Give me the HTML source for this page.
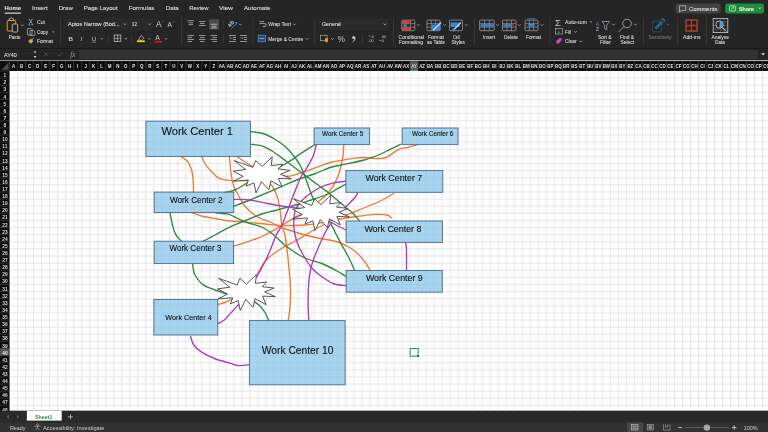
<!DOCTYPE html>
<html><head><meta charset="utf-8"><style>
*{margin:0;padding:0;box-sizing:border-box}
html,body{width:768px;height:432px;overflow:hidden;background:#222}
svg{will-change:transform}
body{position:relative;font-family:"Liberation Sans",sans-serif;color:#e6e6e6}
.a{position:absolute;white-space:nowrap}
</style></head><body>
<div class="a" style="left:0;top:0;width:768px;height:48px;background:#252525"></div>
<div class="a" style="left:0;top:48px;width:768px;height:12px;background:#242424"></div><div class="a" style="left:0;top:47.6px;width:768px;height:0.9px;background:#181818"></div><div class="a" style="left:37px;top:48px;width:0.8px;height:12px;background:#1a1a1a"></div>
<div class="a" style="left:79.4px;top:49.7px;width:678.5px;height:9.4px;background:#323232"></div>
<svg width="768" height="60" style="position:absolute;left:0;top:0" font-family="Liberation Sans"><text x="4.60" y="10.36" font-size="6.00" fill="#e4e4e4" stroke="#e4e4e4" stroke-width="0.07" font-weight="bold" textLength="16.40" lengthAdjust="spacingAndGlyphs">Home</text><text x="31.90" y="10.36" font-size="6.00" fill="#e4e4e4" stroke="#e4e4e4" stroke-width="0.07" font-weight="normal" textLength="15.90" lengthAdjust="spacingAndGlyphs">Insert</text><text x="58.70" y="10.36" font-size="6.00" fill="#e4e4e4" stroke="#e4e4e4" stroke-width="0.07" font-weight="normal" textLength="14.20" lengthAdjust="spacingAndGlyphs">Draw</text><text x="83.80" y="10.36" font-size="6.00" fill="#e4e4e4" stroke="#e4e4e4" stroke-width="0.07" font-weight="normal" textLength="33.80" lengthAdjust="spacingAndGlyphs">Page Layout</text><text x="128.75" y="10.36" font-size="6.00" fill="#e4e4e4" stroke="#e4e4e4" stroke-width="0.07" font-weight="normal" textLength="25.65" lengthAdjust="spacingAndGlyphs">Formulas</text><text x="165.80" y="10.36" font-size="6.00" fill="#e4e4e4" stroke="#e4e4e4" stroke-width="0.07" font-weight="normal" textLength="12.95" lengthAdjust="spacingAndGlyphs">Data</text><text x="189.20" y="10.36" font-size="6.00" fill="#e4e4e4" stroke="#e4e4e4" stroke-width="0.07" font-weight="normal" textLength="19.30" lengthAdjust="spacingAndGlyphs">Review</text><text x="219.00" y="10.36" font-size="6.00" fill="#e4e4e4" stroke="#e4e4e4" stroke-width="0.07" font-weight="normal" textLength="14.00" lengthAdjust="spacingAndGlyphs">View</text><text x="244.00" y="10.36" font-size="6.00" fill="#e4e4e4" stroke="#e4e4e4" stroke-width="0.07" font-weight="normal" textLength="26.40" lengthAdjust="spacingAndGlyphs">Automate</text><rect x="4.6" y="12.6" width="16.4" height="1.1" rx="0.5" fill="#d0d0d0"/><rect x="675.4" y="3.6" width="45.3" height="9.8" rx="2.2" fill="#424242"/><path d="M679.5 5.8h6.2v4.6h-4.2l-2 1.6z" stroke="#d0d0d0" stroke-width="0.7" fill="none" stroke-linejoin="round"/><text x="689.00" y="10.52" font-size="5.60" fill="#e8e8e8" stroke="#e8e8e8" stroke-width="0.07" font-weight="normal" textLength="28.50" lengthAdjust="spacingAndGlyphs">Comments</text><rect x="725.1" y="3.6" width="38.9" height="9.8" rx="2.2" fill="#1e8c3c"/><rect x="729.5" y="5.8" width="6" height="5.2" rx="0.8" stroke="#e0f0e0" stroke-width="0.7" fill="none"/><path d="M731 9.5l2.5-2.4M733.5 7.1h-1.6M733.5 7.1v1.6" stroke="#e0f0e0" stroke-width="0.6" fill="none"/><text x="739.00" y="10.59" font-size="5.80" fill="#f0f7f0" stroke="#f0f7f0" stroke-width="0.07" font-weight="bold" textLength="15.00" lengthAdjust="spacingAndGlyphs">Share</text><path d="M758.50 7.40l1.3 1.4l1.3 -1.4" stroke="#e0f0e0" stroke-width="0.7" fill="none"/><rect x="7.2" y="20.5" width="8.5" height="10.5" rx="0.8" stroke="#e39b2f" stroke-width="1.0" fill="none"/><path d="M9.2 20.2v-1.3l2.2-1 2.2 1v1.3" stroke="#c9c9c9" stroke-width="0.8" fill="none"/><rect x="12.3" y="24" width="5.3" height="8" rx="0.7" stroke="#cfcfcf" stroke-width="0.8" fill="#222"/><path d="M21.10 24.60l1.3 1.4l1.3 -1.4" stroke="#bdbdbd" stroke-width="0.7" fill="none"/><text x="8.70" y="39.00" font-size="5.00" fill="#dedede" stroke="#dedede" stroke-width="0.07" font-weight="normal" textLength="11.80" lengthAdjust="spacingAndGlyphs">Paste</text><path d="M29 18.8l3 4.6M32.5 18.8l-3 4.6" stroke="#c8c8c8" stroke-width="0.7" fill="none"/><circle cx="29.3" cy="24.5" r="1" fill="#3f8fd8"/><circle cx="32.2" cy="24.5" r="1" fill="#3f8fd8"/><text x="37.00" y="24.00" font-size="5.00" fill="#dedede" stroke="#dedede" stroke-width="0.07" font-weight="normal" textLength="8.00" lengthAdjust="spacingAndGlyphs">Cut</text><path d="M27.5 28.5h3.5l1 1v5.5h-4.5z M30 30.5h3.5l1.3 1.3v3.8h-4.8z" stroke="#c8c8c8" stroke-width="0.6" fill="none"/><text x="37.00" y="33.80" font-size="5.00" fill="#dedede" stroke="#dedede" stroke-width="0.07" font-weight="normal" textLength="11.00" lengthAdjust="spacingAndGlyphs">Copy</text><path d="M52.00 31.40h2.4l-1.2 1.4z" fill="#bdbdbd"/><path d="M28.2 41.5l2.8 2.3 2.4-2.8-2.8-2.3z" fill="#e8a83a"/><path d="M31.8 40l2-2.2" stroke="#c8c8c8" stroke-width="0.8"/><text x="37.00" y="42.80" font-size="5.00" fill="#dedede" stroke="#dedede" stroke-width="0.07" font-weight="normal" textLength="16.00" lengthAdjust="spacingAndGlyphs">Format</text><rect x="60.20" y="17.50" width="0.8" height="27.00" fill="#3a3a3a"/><rect x="65.2" y="19.2" width="62.7" height="10.4" rx="1.2" fill="#2a2a2a" stroke="#333" stroke-width="0.5"/><text x="68.00" y="26.31" font-size="5.30" fill="#e0e0e0" stroke="#e0e0e0" stroke-width="0.07" font-weight="normal" textLength="51.50" lengthAdjust="spacingAndGlyphs">Aptos Narrow (Bod...</text><path d="M123.50 23.50l1.3 1.4l1.3 -1.4" stroke="#bdbdbd" stroke-width="0.7" fill="none"/><rect x="129.2" y="19.2" width="23.7" height="10.4" rx="1.2" fill="#2a2a2a" stroke="#333" stroke-width="0.5"/><text x="131.80" y="26.31" font-size="5.30" fill="#e0e0e0" stroke="#e0e0e0" stroke-width="0.07" font-weight="normal" textLength="5.20" lengthAdjust="spacingAndGlyphs">12</text><path d="M148.30 23.50l1.3 1.4l1.3 -1.4" stroke="#bdbdbd" stroke-width="0.7" fill="none"/><text x="156" y="27" font-size="8.2" fill="#d6d6d6">A</text><path d="M161.8 22.2l0.8-0.8 0.8 0.8" stroke="#3f8fd8" stroke-width="0.6" fill="none"/><text x="167.6" y="27" font-size="6.5" fill="#d6d6d6">A</text><path d="M172.7 21.4l0.8 0.8 0.8-0.8" stroke="#3f8fd8" stroke-width="0.6" fill="none"/><text x="68.4" y="41.2" font-size="6.2" font-weight="bold" fill="#cfcfcf">B</text><text x="80.6" y="41.2" font-size="6.2" font-style="italic" fill="#cfcfcf">I</text><text x="91.8" y="40.8" font-size="6.2" fill="#cfcfcf">U</text><rect x="91.8" y="41.8" width="4.2" height="0.5" fill="#cfcfcf"/><path d="M100.60 38.40h2.4l-1.2 1.4z" fill="#bdbdbd"/><rect x="108.10" y="34.00" width="0.8" height="9.00" fill="#3a3a3a"/><rect x="114.2" y="35" width="6.6" height="6.6" stroke="#cfcfcf" stroke-width="0.7" fill="none"/><path d="M117.5 35v6.6M114.2 38.3h6.6" stroke="#cfcfcf" stroke-width="0.6"/><path d="M124.50 37.90l1.3 1.4l1.3 -1.4" stroke="#bdbdbd" stroke-width="0.7" fill="none"/><rect x="131.10" y="34.00" width="0.8" height="9.00" fill="#3a3a3a"/><path d="M138.5 39.5l2.5-4 3 2.5-2.5 2.5z" stroke="#cfcfcf" stroke-width="0.6" fill="none"/><circle cx="143.5" cy="38" r="0.8" fill="#3f8fd8"/><rect x="137" y="40.4" width="7.8" height="1.7" fill="#f0e000"/><path d="M148.00 38.40h2.4l-1.2 1.4z" fill="#bdbdbd"/><text x="155.2" y="40.2" font-size="6.8" fill="#cfcfcf">A</text><rect x="154.5" y="40.9" width="7.5" height="1.7" fill="#e81010"/><path d="M164.80 38.40h2.4l-1.2 1.4z" fill="#bdbdbd"/><rect x="181.00" y="17.50" width="0.8" height="27.00" fill="#3a3a3a"/><rect x="187.50" y="20.40" width="6.50" height="0.7" fill="#c4c4c4"/><rect x="188.50" y="22.50" width="4.50" height="0.7" fill="#c4c4c4"/><rect x="188.50" y="24.40" width="4.50" height="0.7" fill="#c4c4c4"/><rect x="199.00" y="21.30" width="6.50" height="0.7" fill="#c4c4c4"/><rect x="200.00" y="23.30" width="4.50" height="0.7" fill="#c4c4c4"/><rect x="199.00" y="25.30" width="6.50" height="0.7" fill="#c4c4c4"/><rect x="209" y="19.2" width="10" height="10.4" rx="0.8" fill="#4a4a4a"/><rect x="210.80" y="23.80" width="6.50" height="0.7" fill="#d8d8d8"/><rect x="211.80" y="25.80" width="4.50" height="0.7" fill="#d8d8d8"/><rect x="210.80" y="27.60" width="6.50" height="0.7" fill="#d8d8d8"/><rect x="222.90" y="20.00" width="0.8" height="8.50" fill="#3a3a3a"/><text x="0" y="0" transform="translate(229.6,27.2) rotate(-42)" font-size="5.6" font-weight="bold" fill="#c8c8c8">ab</text><path d="M231.2 28.6l5.6-5.6" stroke="#3f8fd8" stroke-width="0.9"/><path d="M235.2 22.6h1.8v1.8" stroke="#3f8fd8" stroke-width="0.7" fill="none"/><path d="M239.20 23.80l1.3 1.4l1.3 -1.4" stroke="#bdbdbd" stroke-width="0.7" fill="none"/><rect x="187.50" y="35.00" width="6.50" height="0.7" fill="#c4c4c4"/><rect x="187.50" y="37.00" width="4.50" height="0.7" fill="#c4c4c4"/><rect x="187.50" y="39.00" width="6.50" height="0.7" fill="#c4c4c4"/><rect x="187.50" y="41.00" width="4.50" height="0.7" fill="#c4c4c4"/><rect x="199.00" y="35.00" width="6.50" height="0.7" fill="#c4c4c4"/><rect x="200.00" y="37.00" width="4.50" height="0.7" fill="#c4c4c4"/><rect x="199.00" y="39.00" width="6.50" height="0.7" fill="#c4c4c4"/><rect x="200.00" y="41.00" width="4.50" height="0.7" fill="#c4c4c4"/><rect x="210.50" y="35.00" width="6.50" height="0.7" fill="#c4c4c4"/><rect x="212.50" y="37.00" width="4.50" height="0.7" fill="#c4c4c4"/><rect x="210.50" y="39.00" width="6.50" height="0.7" fill="#c4c4c4"/><rect x="212.50" y="41.00" width="4.50" height="0.7" fill="#c4c4c4"/><rect x="223.00" y="34.00" width="0.8" height="9.00" fill="#3a3a3a"/><rect x="229.00" y="35.00" width="7.00" height="0.7" fill="#c4c4c4"/><rect x="233.00" y="37.00" width="3.00" height="0.7" fill="#c4c4c4"/><rect x="233.00" y="39.00" width="3.00" height="0.7" fill="#c4c4c4"/><rect x="229.00" y="41.00" width="7.00" height="0.7" fill="#c4c4c4"/><path d="M229.5 38h3M230.8 36.8l-1.3 1.2 1.3 1.2" stroke="#3f8fd8" stroke-width="0.7" fill="none"/><rect x="240.00" y="35.00" width="7.00" height="0.7" fill="#c4c4c4"/><rect x="244.00" y="37.00" width="3.00" height="0.7" fill="#c4c4c4"/><rect x="244.00" y="39.00" width="3.00" height="0.7" fill="#c4c4c4"/><rect x="240.00" y="41.00" width="7.00" height="0.7" fill="#c4c4c4"/><path d="M240.2 38h3M242 36.8l1.3 1.2-1.3 1.2" stroke="#3f8fd8" stroke-width="0.7" fill="none"/><rect x="252.50" y="17.50" width="0.8" height="27.00" fill="#3a3a3a"/><path d="M259.5 21.5h4.5M259.5 23.5h5.5c1.5 0 1.5 3 0 3h-2" stroke="#c4c4c4" stroke-width="0.7" fill="none"/><path d="M263 26.5l1-1M263 26.5l1 1" stroke="#3f8fd8" stroke-width="0.7"/><text x="268.20" y="26.30" font-size="5.00" fill="#dedede" stroke="#dedede" stroke-width="0.07" font-weight="normal" textLength="22.60" lengthAdjust="spacingAndGlyphs">Wrap Text</text><path d="M293.20 23.60l1.3 1.4l1.3 -1.4" stroke="#bdbdbd" stroke-width="0.7" fill="none"/><rect x="258.2" y="35.2" width="7.3" height="6.6" stroke="#4aa0e0" stroke-width="0.7" fill="#2c4a66"/><path d="M259.5 38.5h4.7" stroke="#d8e8f8" stroke-width="0.6"/><text x="268.20" y="40.80" font-size="5.00" fill="#dedede" stroke="#dedede" stroke-width="0.07" font-weight="normal" textLength="35.10" lengthAdjust="spacingAndGlyphs">Merge &amp; Centre</text><path d="M305.70 38.10l1.3 1.4l1.3 -1.4" stroke="#bdbdbd" stroke-width="0.7" fill="none"/><rect x="314.40" y="17.50" width="0.8" height="27.00" fill="#3a3a3a"/><rect x="319.2" y="19.2" width="68.7" height="10.4" rx="1.2" fill="#2a2a2a" stroke="#333" stroke-width="0.5"/><text x="322.00" y="26.31" font-size="5.30" fill="#e0e0e0" stroke="#e0e0e0" stroke-width="0.07" font-weight="normal" textLength="18.80" lengthAdjust="spacingAndGlyphs">General</text><path d="M383.70 23.60l1.3 1.4l1.3 -1.4" stroke="#bdbdbd" stroke-width="0.7" fill="none"/><rect x="320.5" y="35.2" width="6.5" height="5.5" stroke="#bdbdbd" stroke-width="0.6" fill="none"/><rect x="325" y="38" width="3" height="4.3" rx="1" fill="#e59a2f"/><path d="M331.20 38.10l1.3 1.4l1.3 -1.4" stroke="#bdbdbd" stroke-width="0.7" fill="none"/><text x="337.4" y="42.2" font-size="8.4" fill="#c8c8c8">%</text><circle cx="353.6" cy="37.4" r="1.5" fill="#c8c8c8"/><path d="M354.9 37.6c0.3 2-0.6 3.4-2.2 4.2" stroke="#c8c8c8" stroke-width="1" fill="none"/><rect x="362.10" y="34.00" width="0.8" height="9.00" fill="#3a3a3a"/><text x="368.5" y="41.8" font-size="3.6" fill="#c8c8c8">.00</text><text x="371" y="37.6" font-size="3.6" fill="#c8c8c8">.0</text><path d="M368.3 36h2.5" stroke="#3f8fd8" stroke-width="0.8"/><text x="381" y="41.8" font-size="3.6" fill="#c8c8c8">.0</text><text x="381" y="37.6" font-size="3.6" fill="#c8c8c8">.00</text><path d="M379 40.5h2.5" stroke="#3f8fd8" stroke-width="0.8"/><rect x="393.20" y="17.50" width="0.8" height="27.00" fill="#3a3a3a"/><rect x="401.80" y="20.10" width="13.00" height="10.60" rx="1" stroke="#bdbdbd" stroke-width="0.6" fill="none"/><path d="M406.13 20.10v10.60" stroke="#bdbdbd" stroke-width="0.5"/><path d="M401.80 23.63h13.00" stroke="#bdbdbd" stroke-width="0.5"/><path d="M410.47 20.10v10.60" stroke="#bdbdbd" stroke-width="0.5"/><path d="M401.80 27.17h13.00" stroke="#bdbdbd" stroke-width="0.5"/><rect x="402.2" y="20.5" width="8.6" height="3.2" fill="#d0413a"/><rect x="402.2" y="27.3" width="8.6" height="3.2" fill="#d0413a"/><rect x="403.5" y="24.3" width="3" height="2.4" fill="#3f8fd8"/><path d="M417.20 24.30l1.3 1.4l1.3 -1.4" stroke="#bdbdbd" stroke-width="0.7" fill="none"/><text x="398.50" y="38.50" font-size="5.00" fill="#dedede" stroke="#dedede" stroke-width="0.07" font-weight="normal" textLength="25.50" lengthAdjust="spacingAndGlyphs">Conditional</text><text x="399.00" y="43.70" font-size="5.00" fill="#dedede" stroke="#dedede" stroke-width="0.07" font-weight="normal" textLength="24.00" lengthAdjust="spacingAndGlyphs">Formatting</text><rect x="427.00" y="20.10" width="13.00" height="10.60" rx="1" stroke="#bdbdbd" stroke-width="0.6" fill="none"/><path d="M431.33 20.10v10.60" stroke="#bdbdbd" stroke-width="0.5"/><path d="M427.00 23.63h13.00" stroke="#bdbdbd" stroke-width="0.5"/><path d="M435.67 20.10v10.60" stroke="#bdbdbd" stroke-width="0.5"/><path d="M427.00 27.17h13.00" stroke="#bdbdbd" stroke-width="0.5"/><path d="M432 24.5h8.5v6h-8.5z" fill="#2f8ae0"/><path d="M433 30.5l8-8" stroke="#d8d8d8" stroke-width="1.2"/><path d="M443.20 24.30l1.3 1.4l1.3 -1.4" stroke="#bdbdbd" stroke-width="0.7" fill="none"/><text x="428.00" y="38.50" font-size="5.00" fill="#dedede" stroke="#dedede" stroke-width="0.07" font-weight="normal" textLength="16.00" lengthAdjust="spacingAndGlyphs">Format</text><text x="427.00" y="43.70" font-size="5.00" fill="#dedede" stroke="#dedede" stroke-width="0.07" font-weight="normal" textLength="18.00" lengthAdjust="spacingAndGlyphs">as Table</text><rect x="449.5" y="20.1" width="13" height="10.6" rx="1" stroke="#bdbdbd" stroke-width="0.6" fill="none"/><rect x="450.5" y="22.5" width="9" height="4.5" fill="#2f8ae0"/><path d="M453 30.5l8-8" stroke="#d8d8d8" stroke-width="1.2"/><circle cx="453.5" cy="30" r="1.5" fill="#2f8ae0"/><path d="M465.20 24.30l1.3 1.4l1.3 -1.4" stroke="#bdbdbd" stroke-width="0.7" fill="none"/><text x="453.00" y="38.50" font-size="5.00" fill="#dedede" stroke="#dedede" stroke-width="0.07" font-weight="normal" textLength="6.50" lengthAdjust="spacingAndGlyphs">Cell</text><text x="451.50" y="43.70" font-size="5.00" fill="#dedede" stroke="#dedede" stroke-width="0.07" font-weight="normal" textLength="13.50" lengthAdjust="spacingAndGlyphs">Styles</text><rect x="474.00" y="17.50" width="0.8" height="27.00" fill="#3a3a3a"/><rect x="479.60" y="20.10" width="14.60" height="10.60" rx="1" stroke="#bdbdbd" stroke-width="0.6" fill="none"/><path d="M484.47 20.10v10.60" stroke="#bdbdbd" stroke-width="0.5"/><path d="M479.60 23.63h14.60" stroke="#bdbdbd" stroke-width="0.5"/><path d="M489.33 20.10v10.60" stroke="#bdbdbd" stroke-width="0.5"/><path d="M479.60 27.17h14.60" stroke="#bdbdbd" stroke-width="0.5"/><rect x="481" y="24.2" width="13" height="2.4" fill="#2f8ae0"/><path d="M482.5 23.5l-2 1.9 2 1.9" stroke="#2f8ae0" stroke-width="0.8" fill="none"/><path d="M496.20 24.30l1.3 1.4l1.3 -1.4" stroke="#bdbdbd" stroke-width="0.7" fill="none"/><text x="483.00" y="38.70" font-size="5.00" fill="#dedede" stroke="#dedede" stroke-width="0.07" font-weight="normal" textLength="12.00" lengthAdjust="spacingAndGlyphs">Insert</text><rect x="502.50" y="20.10" width="13.50" height="10.60" rx="1" stroke="#bdbdbd" stroke-width="0.6" fill="none"/><path d="M507.00 20.10v10.60" stroke="#bdbdbd" stroke-width="0.5"/><path d="M502.50 23.63h13.50" stroke="#bdbdbd" stroke-width="0.5"/><path d="M511.50 20.10v10.60" stroke="#bdbdbd" stroke-width="0.5"/><path d="M502.50 27.17h13.50" stroke="#bdbdbd" stroke-width="0.5"/><rect x="503.5" y="24.2" width="8" height="2.4" fill="#2f8ae0"/><path d="M510.5 23l3.8 3.8M514.3 23l-3.8 3.8" stroke="#d83a2a" stroke-width="0.8"/><path d="M518.20 24.30l1.3 1.4l1.3 -1.4" stroke="#bdbdbd" stroke-width="0.7" fill="none"/><text x="504.00" y="38.70" font-size="5.00" fill="#dedede" stroke="#dedede" stroke-width="0.07" font-weight="normal" textLength="14.00" lengthAdjust="spacingAndGlyphs">Delete</text><rect x="525.00" y="20.10" width="13.00" height="10.60" rx="1" stroke="#bdbdbd" stroke-width="0.6" fill="none"/><path d="M529.33 20.10v10.60" stroke="#bdbdbd" stroke-width="0.5"/><path d="M525.00 23.63h13.00" stroke="#bdbdbd" stroke-width="0.5"/><path d="M533.67 20.10v10.60" stroke="#bdbdbd" stroke-width="0.5"/><path d="M525.00 27.17h13.00" stroke="#bdbdbd" stroke-width="0.5"/><rect x="528.5" y="24" width="6" height="2.6" fill="#2f8ae0"/><rect x="527.3" y="18.4" width="8" height="0.7" fill="#2f8ae0"/><path d="M540.70 24.30l1.3 1.4l1.3 -1.4" stroke="#bdbdbd" stroke-width="0.7" fill="none"/><text x="526.00" y="38.70" font-size="5.00" fill="#dedede" stroke="#dedede" stroke-width="0.07" font-weight="normal" textLength="15.00" lengthAdjust="spacingAndGlyphs">Format</text><rect x="549.50" y="17.50" width="0.8" height="27.00" fill="#3a3a3a"/><text x="555" y="25.8" font-size="9.6" fill="#c8c8c8">&#931;</text><text x="565.00" y="23.90" font-size="5.00" fill="#dedede" stroke="#dedede" stroke-width="0.07" font-weight="normal" textLength="21.90" lengthAdjust="spacingAndGlyphs">Auto-sum</text><path d="M589.80 21.40h2.4l-1.2 1.4z" fill="#bdbdbd"/><rect x="555.3" y="28.6" width="7" height="5.4" stroke="#bdbdbd" stroke-width="0.6" fill="none"/><path d="M558.8 30v3M557.5 31.8l1.3 1.3 1.3-1.3" stroke="#3f8fd8" stroke-width="0.6" fill="none"/><text x="565.00" y="33.70" font-size="5.00" fill="#dedede" stroke="#dedede" stroke-width="0.07" font-weight="normal" textLength="6.00" lengthAdjust="spacingAndGlyphs">Fill</text><path d="M574.20 31.10l1.3 1.4l1.3 -1.4" stroke="#bdbdbd" stroke-width="0.7" fill="none"/><path d="M555.5 42l4.5-4.5 2.3 2.3-4.5 4.5z" fill="#c33bc7"/><path d="M557.5 40l2.3 2.3" stroke="#f0c0f0" stroke-width="0.5"/><text x="565.00" y="43.30" font-size="5.00" fill="#dedede" stroke="#dedede" stroke-width="0.07" font-weight="normal" textLength="11.50" lengthAdjust="spacingAndGlyphs">Clear</text><path d="M579.70 40.70l1.3 1.4l1.3 -1.4" stroke="#bdbdbd" stroke-width="0.7" fill="none"/><text x="595.7" y="25.5" font-size="5" fill="#3f8fd8">A</text><text x="596" y="30.5" font-size="5" fill="#bdbdbd">Z</text><path d="M602 21.5h7.5l-2.8 3.8v4.5l-2-1v-3.5z" stroke="#c8c8c8" stroke-width="0.6" fill="none"/><path d="M612.20 23.80l1.3 1.4l1.3 -1.4" stroke="#bdbdbd" stroke-width="0.7" fill="none"/><text x="598.00" y="39.10" font-size="5.00" fill="#dedede" stroke="#dedede" stroke-width="0.07" font-weight="normal" textLength="13.50" lengthAdjust="spacingAndGlyphs">Sort &amp;</text><text x="600.00" y="43.80" font-size="5.00" fill="#dedede" stroke="#dedede" stroke-width="0.07" font-weight="normal" textLength="11.00" lengthAdjust="spacingAndGlyphs">Filter</text><circle cx="627" cy="23.5" r="4.3" stroke="#c8c8c8" stroke-width="0.7" fill="none"/><path d="M623.9 26.6l-5.4 5.4" stroke="#c8c8c8" stroke-width="0.7"/><path d="M634.20 23.80l1.3 1.4l1.3 -1.4" stroke="#bdbdbd" stroke-width="0.7" fill="none"/><text x="620.00" y="38.90" font-size="5.00" fill="#dedede" stroke="#dedede" stroke-width="0.07" font-weight="normal" textLength="14.00" lengthAdjust="spacingAndGlyphs">Find &amp;</text><text x="620.50" y="43.70" font-size="5.00" fill="#dedede" stroke="#dedede" stroke-width="0.07" font-weight="normal" textLength="13.50" lengthAdjust="spacingAndGlyphs">Select</text><rect x="643.10" y="17.50" width="0.8" height="27.00" fill="#3a3a3a"/><rect x="652.4" y="21.2" width="9" height="10.6" rx="0.6" stroke="#25556f" stroke-width="0.8" fill="none"/><path d="M655.5 28.5l6.5-6.5" stroke="#2d6a8c" stroke-width="2.6"/><path d="M656.2 26.6l1.6 1.6M657.6 25.2l1.6 1.6M659 23.8l1.6 1.6" stroke="#1c3f52" stroke-width="0.5"/><path d="M661.2 20.2l1.8-1.6 1.8 1.8-1.6 1.8" stroke="#2d6a8c" stroke-width="1.1" fill="none"/><path d="M666.70 23.80l1.3 1.4l1.3 -1.4" stroke="#6a6a6a" stroke-width="0.7" fill="none"/><text x="648.50" y="38.80" font-size="5.00" fill="#777777" stroke="#777777" stroke-width="0.07" font-weight="normal" textLength="23.00" lengthAdjust="spacingAndGlyphs">Sensitivity</text><rect x="677.30" y="17.50" width="0.8" height="27.00" fill="#3a3a3a"/><rect x="685.2" y="19.2" width="12.6" height="12.6" fill="#a83f2a"/><rect x="686.8" y="20.8" width="4" height="4" fill="#222"/><rect x="692.2" y="20.8" width="4" height="4" fill="#222"/><rect x="686.8" y="26.2" width="4" height="4" fill="#222"/><rect x="692.2" y="26.2" width="4" height="4" fill="#222"/><text x="683.00" y="39.10" font-size="5.00" fill="#dedede" stroke="#dedede" stroke-width="0.07" font-weight="normal" textLength="17.50" lengthAdjust="spacingAndGlyphs">Add-ins</text><rect x="706.20" y="17.50" width="0.8" height="27.00" fill="#3a3a3a"/><rect x="713.2" y="18.4" width="14.6" height="14.2" stroke="#cfcfcf" stroke-width="0.8" fill="none"/><path d="M713.2 22h14.6M713.2 25.5h14.6M713.2 29h14.6M717 18.4v14.2M720.5 18.4v14.2M724 18.4v14.2" stroke="#8a8a8a" stroke-width="0.4"/><circle cx="719.5" cy="24.6" r="3.6" fill="#222" stroke="#e0e0e0" stroke-width="0.8"/><path d="M719.5 21.3a3.3 3.3 0 0 1 0 6.6z" fill="#4a9ae8"/><path d="M722 27.3l4.3 4.3" stroke="#e0e0e0" stroke-width="1"/><text x="711.50" y="39.20" font-size="5.00" fill="#dedede" stroke="#dedede" stroke-width="0.07" font-weight="normal" textLength="17.50" lengthAdjust="spacingAndGlyphs">Analyse</text><text x="715.00" y="43.80" font-size="5.00" fill="#dedede" stroke="#dedede" stroke-width="0.07" font-weight="normal" textLength="10.00" lengthAdjust="spacingAndGlyphs">Data</text><text x="4.00" y="56.69" font-size="5.80" fill="#e4e4e4" stroke="#e4e4e4" stroke-width="0.07" font-weight="normal" textLength="12.80" lengthAdjust="spacingAndGlyphs">AY40</text><path d="M33.6 52.6l1.5-1.9 1.5 1.9zM33.6 56.1l1.5 1.9 1.5-1.9z" fill="#d4d4d4"/><path d="M44.5 52.5l3.4 3.4M47.9 52.5l-3.4 3.4" stroke="#6a6a6a" stroke-width="0.6"/><path d="M57.8 54.4l1.6 1.6 3.2-3.4" stroke="#6a6a6a" stroke-width="0.6" fill="none"/><text x="70.3" y="56.9" font-size="7.2" font-style="italic" font-family="Liberation Serif" fill="#a0a0a0">fx</text><path d="M761.2 53.3h3.8l-1.9 2.2z" fill="#d8d8d8"/></svg><svg width="768" height="372" viewBox="0 60 768 372" style="position:absolute;left:0;top:60px"><rect x="0" y="60" width="768" height="1.2" fill="#8a8a8a"/><rect x="79.4" y="60" width="688.6" height="1.2" fill="#b4b4b4"/><rect x="0" y="61.2" width="768" height="9.80" fill="#0d0d0d"/><rect x="0" y="71.00" width="9.60" height="339.80" fill="#0d0d0d"/><rect x="9.60" y="71.00" width="758.40" height="339.80" fill="#ffffff"/><path d="M17.61 71.00V410.80M25.62 71.00V410.80M33.63 71.00V410.80M41.64 71.00V410.80M49.65 71.00V410.80M57.66 71.00V410.80M65.67 71.00V410.80M73.68 71.00V410.80M81.69 71.00V410.80M89.70 71.00V410.80M97.71 71.00V410.80M105.72 71.00V410.80M113.73 71.00V410.80M121.74 71.00V410.80M129.75 71.00V410.80M137.76 71.00V410.80M145.77 71.00V410.80M153.78 71.00V410.80M161.79 71.00V410.80M169.80 71.00V410.80M177.81 71.00V410.80M185.82 71.00V410.80M193.83 71.00V410.80M201.84 71.00V410.80M209.85 71.00V410.80M217.86 71.00V410.80M225.87 71.00V410.80M233.88 71.00V410.80M241.89 71.00V410.80M249.90 71.00V410.80M257.91 71.00V410.80M265.92 71.00V410.80M273.93 71.00V410.80M281.94 71.00V410.80M289.95 71.00V410.80M297.96 71.00V410.80M305.97 71.00V410.80M313.98 71.00V410.80M321.99 71.00V410.80M330.00 71.00V410.80M338.01 71.00V410.80M346.02 71.00V410.80M354.03 71.00V410.80M362.04 71.00V410.80M370.05 71.00V410.80M378.06 71.00V410.80M386.07 71.00V410.80M394.08 71.00V410.80M402.09 71.00V410.80M410.10 71.00V410.80M418.11 71.00V410.80M426.12 71.00V410.80M434.13 71.00V410.80M442.14 71.00V410.80M450.15 71.00V410.80M458.16 71.00V410.80M466.17 71.00V410.80M474.18 71.00V410.80M482.19 71.00V410.80M490.20 71.00V410.80M498.21 71.00V410.80M506.22 71.00V410.80M514.23 71.00V410.80M522.24 71.00V410.80M530.25 71.00V410.80M538.26 71.00V410.80M546.27 71.00V410.80M554.28 71.00V410.80M562.29 71.00V410.80M570.30 71.00V410.80M578.31 71.00V410.80M586.32 71.00V410.80M594.33 71.00V410.80M602.34 71.00V410.80M610.35 71.00V410.80M618.36 71.00V410.80M626.37 71.00V410.80M634.38 71.00V410.80M642.39 71.00V410.80M650.40 71.00V410.80M658.41 71.00V410.80M666.42 71.00V410.80M674.43 71.00V410.80M682.44 71.00V410.80M690.45 71.00V410.80M698.46 71.00V410.80M706.47 71.00V410.80M714.48 71.00V410.80M722.49 71.00V410.80M730.50 71.00V410.80M738.51 71.00V410.80M746.52 71.00V410.80M754.53 71.00V410.80M762.54 71.00V410.80M9.60 78.11H768M9.60 85.23H768M9.60 92.34H768M9.60 99.46H768M9.60 106.57H768M9.60 113.69H768M9.60 120.80H768M9.60 127.92H768M9.60 135.03H768M9.60 142.15H768M9.60 149.26H768M9.60 156.38H768M9.60 163.50H768M9.60 170.61H768M9.60 177.73H768M9.60 184.84H768M9.60 191.96H768M9.60 199.07H768M9.60 206.19H768M9.60 213.30H768M9.60 220.42H768M9.60 227.53H768M9.60 234.65H768M9.60 241.76H768M9.60 248.88H768M9.60 255.99H768M9.60 263.11H768M9.60 270.22H768M9.60 277.34H768M9.60 284.45H768M9.60 291.57H768M9.60 298.68H768M9.60 305.80H768M9.60 312.91H768M9.60 320.03H768M9.60 327.14H768M9.60 334.26H768M9.60 341.37H768M9.60 348.49H768M9.60 355.60H768M9.60 362.72H768M9.60 369.83H768M9.60 376.95H768M9.60 384.06H768M9.60 391.18H768M9.60 398.29H768M9.60 405.41H768" stroke="#e7e7e7" stroke-width="1" fill="none"/><path d="M9.60 61.2V71.00M17.61 61.2V71.00M25.62 61.2V71.00M33.63 61.2V71.00M41.64 61.2V71.00M49.65 61.2V71.00M57.66 61.2V71.00M65.67 61.2V71.00M73.68 61.2V71.00M81.69 61.2V71.00M89.70 61.2V71.00M97.71 61.2V71.00M105.72 61.2V71.00M113.73 61.2V71.00M121.74 61.2V71.00M129.75 61.2V71.00M137.76 61.2V71.00M145.77 61.2V71.00M153.78 61.2V71.00M161.79 61.2V71.00M169.80 61.2V71.00M177.81 61.2V71.00M185.82 61.2V71.00M193.83 61.2V71.00M201.84 61.2V71.00M209.85 61.2V71.00M217.86 61.2V71.00M225.87 61.2V71.00M233.88 61.2V71.00M241.89 61.2V71.00M249.90 61.2V71.00M257.91 61.2V71.00M265.92 61.2V71.00M273.93 61.2V71.00M281.94 61.2V71.00M289.95 61.2V71.00M297.96 61.2V71.00M305.97 61.2V71.00M313.98 61.2V71.00M321.99 61.2V71.00M330.00 61.2V71.00M338.01 61.2V71.00M346.02 61.2V71.00M354.03 61.2V71.00M362.04 61.2V71.00M370.05 61.2V71.00M378.06 61.2V71.00M386.07 61.2V71.00M394.08 61.2V71.00M402.09 61.2V71.00M410.10 61.2V71.00M418.11 61.2V71.00M426.12 61.2V71.00M434.13 61.2V71.00M442.14 61.2V71.00M450.15 61.2V71.00M458.16 61.2V71.00M466.17 61.2V71.00M474.18 61.2V71.00M482.19 61.2V71.00M490.20 61.2V71.00M498.21 61.2V71.00M506.22 61.2V71.00M514.23 61.2V71.00M522.24 61.2V71.00M530.25 61.2V71.00M538.26 61.2V71.00M546.27 61.2V71.00M554.28 61.2V71.00M562.29 61.2V71.00M570.30 61.2V71.00M578.31 61.2V71.00M586.32 61.2V71.00M594.33 61.2V71.00M602.34 61.2V71.00M610.35 61.2V71.00M618.36 61.2V71.00M626.37 61.2V71.00M634.38 61.2V71.00M642.39 61.2V71.00M650.40 61.2V71.00M658.41 61.2V71.00M666.42 61.2V71.00M674.43 61.2V71.00M682.44 61.2V71.00M690.45 61.2V71.00M698.46 61.2V71.00M706.47 61.2V71.00M714.48 61.2V71.00M722.49 61.2V71.00M730.50 61.2V71.00M738.51 61.2V71.00M746.52 61.2V71.00M754.53 61.2V71.00M762.54 61.2V71.00M0 71.00H9.60M0 78.11H9.60M0 85.23H9.60M0 92.34H9.60M0 99.46H9.60M0 106.57H9.60M0 113.69H9.60M0 120.80H9.60M0 127.92H9.60M0 135.03H9.60M0 142.15H9.60M0 149.26H9.60M0 156.38H9.60M0 163.50H9.60M0 170.61H9.60M0 177.73H9.60M0 184.84H9.60M0 191.96H9.60M0 199.07H9.60M0 206.19H9.60M0 213.30H9.60M0 220.42H9.60M0 227.53H9.60M0 234.65H9.60M0 241.76H9.60M0 248.88H9.60M0 255.99H9.60M0 263.11H9.60M0 270.22H9.60M0 277.34H9.60M0 284.45H9.60M0 291.57H9.60M0 298.68H9.60M0 305.80H9.60M0 312.91H9.60M0 320.03H9.60M0 327.14H9.60M0 334.26H9.60M0 341.37H9.60M0 348.49H9.60M0 355.60H9.60M0 362.72H9.60M0 369.83H9.60M0 376.95H9.60M0 384.06H9.60M0 391.18H9.60M0 398.29H9.60M0 405.41H9.60" stroke="#3a3a3a" stroke-width="0.8" fill="none"/><path d="M8.5 62.5V69.8H1.5Z" fill="#4a4a4a"/><g transform="scale(0.820,1)" font-family="Liberation Sans" font-size="5.4" font-weight="bold" fill="#e2e2e2" text-anchor="middle"><text x="16.59" y="67.9">A</text><text x="26.36" y="67.9">B</text><text x="36.13" y="67.9">C</text><text x="45.90" y="67.9">D</text><text x="55.66" y="67.9">E</text><text x="65.43" y="67.9">F</text><text x="75.20" y="67.9">G</text><text x="84.97" y="67.9">H</text><text x="94.74" y="67.9">I</text><text x="104.51" y="67.9">J</text><text x="114.27" y="67.9">K</text><text x="124.04" y="67.9">L</text><text x="133.81" y="67.9">M</text><text x="143.58" y="67.9">N</text><text x="153.35" y="67.9">O</text><text x="163.12" y="67.9">P</text><text x="172.88" y="67.9">Q</text><text x="182.65" y="67.9">R</text><text x="192.42" y="67.9">S</text><text x="202.19" y="67.9">T</text><text x="211.96" y="67.9">U</text><text x="221.73" y="67.9">V</text><text x="231.49" y="67.9">W</text><text x="241.26" y="67.9">X</text><text x="251.03" y="67.9">Y</text><text x="260.80" y="67.9">Z</text><text x="270.57" y="67.9">AA</text><text x="280.34" y="67.9">AB</text><text x="290.10" y="67.9">AC</text><text x="299.87" y="67.9">AD</text><text x="309.64" y="67.9">AE</text><text x="319.41" y="67.9">AF</text><text x="329.18" y="67.9">AG</text><text x="338.95" y="67.9">AH</text><text x="348.71" y="67.9">AI</text><text x="358.48" y="67.9">AJ</text><text x="368.25" y="67.9">AK</text><text x="378.02" y="67.9">AL</text><text x="387.79" y="67.9">AM</text><text x="397.55" y="67.9">AN</text><text x="407.32" y="67.9">AO</text><text x="417.09" y="67.9">AP</text><text x="426.86" y="67.9">AQ</text><text x="436.63" y="67.9">AR</text><text x="446.40" y="67.9">AS</text><text x="456.16" y="67.9">AT</text><text x="465.93" y="67.9">AU</text><text x="475.70" y="67.9">AV</text><text x="485.47" y="67.9">AW</text><text x="495.24" y="67.9">AX</text><text x="514.77" y="67.9">AZ</text><text x="524.54" y="67.9">BA</text><text x="534.31" y="67.9">BB</text><text x="544.08" y="67.9">BC</text><text x="553.85" y="67.9">BD</text><text x="563.62" y="67.9">BE</text><text x="573.38" y="67.9">BF</text><text x="583.15" y="67.9">BG</text><text x="592.92" y="67.9">BH</text><text x="602.69" y="67.9">BI</text><text x="612.46" y="67.9">BJ</text><text x="622.23" y="67.9">BK</text><text x="631.99" y="67.9">BL</text><text x="641.76" y="67.9">BM</text><text x="651.53" y="67.9">BN</text><text x="661.30" y="67.9">BO</text><text x="671.07" y="67.9">BP</text><text x="680.84" y="67.9">BQ</text><text x="690.60" y="67.9">BR</text><text x="700.37" y="67.9">BS</text><text x="710.14" y="67.9">BT</text><text x="719.91" y="67.9">BU</text><text x="729.68" y="67.9">BV</text><text x="739.45" y="67.9">BW</text><text x="749.21" y="67.9">BX</text><text x="758.98" y="67.9">BY</text><text x="768.75" y="67.9">BZ</text><text x="778.52" y="67.9">CA</text><text x="788.29" y="67.9">CB</text><text x="798.05" y="67.9">CC</text><text x="807.82" y="67.9">CD</text><text x="817.59" y="67.9">CE</text><text x="827.36" y="67.9">CF</text><text x="837.13" y="67.9">CG</text><text x="846.90" y="67.9">CH</text><text x="856.66" y="67.9">CI</text><text x="866.43" y="67.9">CJ</text><text x="876.20" y="67.9">CK</text><text x="885.97" y="67.9">CL</text><text x="895.74" y="67.9">CM</text><text x="905.51" y="67.9">CN</text><text x="915.27" y="67.9">CO</text><text x="925.04" y="67.9">CP</text><text x="934.81" y="67.9">CQ</text></g><g font-family="Liberation Sans" font-size="4.8" font-weight="bold" fill="#d8d8d8" text-anchor="middle"><text x="4.9" y="77.16">1</text><text x="4.9" y="84.27">2</text><text x="4.9" y="91.39">3</text><text x="4.9" y="98.50">4</text><text x="4.9" y="105.62">5</text><text x="4.9" y="112.73">6</text><text x="4.9" y="119.85">7</text><text x="4.9" y="126.96">8</text><text x="4.9" y="134.08">9</text><text x="4.9" y="141.19">10</text><text x="4.9" y="148.31">11</text><text x="4.9" y="155.42">12</text><text x="4.9" y="162.54">13</text><text x="4.9" y="169.65">14</text><text x="4.9" y="176.77">15</text><text x="4.9" y="183.88">16</text><text x="4.9" y="191.00">17</text><text x="4.9" y="198.11">18</text><text x="4.9" y="205.23">19</text><text x="4.9" y="212.34">20</text><text x="4.9" y="219.46">21</text><text x="4.9" y="226.57">22</text><text x="4.9" y="233.69">23</text><text x="4.9" y="240.80">24</text><text x="4.9" y="247.92">25</text><text x="4.9" y="255.03">26</text><text x="4.9" y="262.15">27</text><text x="4.9" y="269.26">28</text><text x="4.9" y="276.38">29</text><text x="4.9" y="283.49">30</text><text x="4.9" y="290.61">31</text><text x="4.9" y="297.72">32</text><text x="4.9" y="304.84">33</text><text x="4.9" y="311.95">34</text><text x="4.9" y="319.07">35</text><text x="4.9" y="326.18">36</text><text x="4.9" y="333.30">37</text><text x="4.9" y="340.41">38</text><text x="4.9" y="347.53">39</text><text x="4.9" y="354.64">40</text><text x="4.9" y="361.76">41</text><text x="4.9" y="368.87">42</text><text x="4.9" y="375.99">43</text><text x="4.9" y="383.10">44</text><text x="4.9" y="390.22">45</text><text x="4.9" y="397.33">46</text><text x="4.9" y="404.45">47</text><text x="4.9" y="411.56">48</text></g><rect x="410.10" y="61.2" width="8.01" height="9.80" fill="#5a5a5a"/><text x="505.01" y="67.9" transform="scale(0.82,1)" font-family="Liberation Sans" font-size="5.4" font-weight="bold" fill="#d0d0d0" text-anchor="middle">AY</text><rect x="0" y="348.49" width="9.60" height="7.12" fill="#555"/><text x="4.9" y="354.64" font-family="Liberation Sans" font-size="4.8" font-weight="bold" fill="#e8e8e8" text-anchor="middle">40</text><rect x="9.00" y="348.49" width="1" height="7.12" fill="#3f9a54"/><rect x="410.10" y="70.00" width="8.01" height="1" fill="#3f9a54"/><path d="M181.25 156.90C182.29 157.62 185.83 159.28 187.50 161.25C189.17 163.22 190.32 165.83 191.25 168.75C192.18 171.67 192.72 174.88 193.10 178.75C193.47 182.62 193.43 189.79 193.50 192.00" stroke="#ee7a32" stroke-width="1.35" fill="none" stroke-linecap="round" stroke-linejoin="round"/><path d="M201.90 157.00C202.42 158.12 203.44 161.38 205.00 163.75C206.56 166.12 209.27 169.06 211.25 171.25C213.23 173.44 215.03 175.54 216.90 176.90C218.78 178.26 219.90 178.78 222.50 179.40C225.10 180.02 228.12 180.40 232.50 180.60C236.88 180.80 243.83 180.53 248.75 180.60C253.67 180.67 258.25 180.27 262.00 181.00C265.75 181.73 268.67 182.25 271.25 185.00C273.83 187.75 276.04 193.33 277.50 197.50C278.96 201.67 279.27 205.32 280.00 210.00C280.73 214.68 281.07 221.43 281.90 225.60C282.73 229.77 284.07 230.31 285.00 235.00C285.93 239.69 286.73 247.08 287.50 253.75C288.27 260.42 289.08 269.17 289.60 275.00C290.12 280.83 290.53 283.33 290.60 288.75C290.67 294.17 290.42 302.19 290.00 307.50C289.58 312.81 288.42 318.42 288.10 320.60" stroke="#ee7a32" stroke-width="1.35" fill="none" stroke-linecap="round" stroke-linejoin="round"/><path d="M229.40 157.00C229.71 160.00 230.53 170.12 231.25 175.00C231.97 179.88 232.71 183.12 233.75 186.25C234.79 189.38 235.62 190.42 237.50 193.75C239.38 197.08 241.88 202.50 245.00 206.25C248.12 210.00 251.88 213.54 256.25 216.25C260.62 218.96 266.46 220.42 271.25 222.50C276.04 224.58 278.54 226.46 285.00 228.75C291.46 231.04 301.67 234.17 310.00 236.25C318.33 238.33 328.83 239.62 335.00 241.25C341.17 242.88 343.50 244.21 347.00 246.00C350.50 247.79 353.00 249.33 356.00 252.00C359.00 254.67 362.63 258.90 365.00 262.00C367.37 265.10 369.33 269.17 370.20 270.60" stroke="#ee7a32" stroke-width="1.35" fill="none" stroke-linecap="round" stroke-linejoin="round"/><path d="M237.50 156.90C239.58 158.25 245.42 162.48 250.00 165.00C254.58 167.52 258.85 170.12 265.00 172.00C271.15 173.88 279.82 176.48 286.90 176.25C293.98 176.02 300.32 172.89 307.50 170.60C314.68 168.31 324.58 164.17 330.00 162.50C335.42 160.83 335.83 161.33 340.00 160.60C344.17 159.87 350.83 158.62 355.00 158.10C359.17 157.58 361.46 157.43 365.00 157.50C368.54 157.57 372.71 158.50 376.25 158.50C379.79 158.50 382.50 159.02 386.25 157.50C390.00 155.98 395.21 151.07 398.75 149.40C402.29 147.73 404.58 148.20 407.50 147.50C410.42 146.80 414.79 145.58 416.25 145.20" stroke="#ee7a32" stroke-width="1.35" fill="none" stroke-linecap="round" stroke-linejoin="round"/><path d="M343.75 144.80C343.64 146.50 343.52 151.63 343.10 155.00C342.68 158.37 342.18 161.25 341.25 165.00C340.32 168.75 339.58 172.92 337.50 177.50C335.42 182.08 331.88 188.54 328.75 192.50C325.62 196.46 320.42 199.79 318.75 201.25" stroke="#ee7a32" stroke-width="1.35" fill="none" stroke-linecap="round" stroke-linejoin="round"/><path d="M191.90 212.75C193.67 213.33 198.44 215.25 202.50 216.25C206.56 217.25 211.67 217.96 216.25 218.75C220.83 219.54 225.42 220.47 230.00 221.00C234.58 221.53 238.33 221.44 243.75 221.90C249.17 222.36 256.14 223.13 262.50 223.75C268.86 224.37 274.82 225.39 281.90 225.60C288.98 225.81 298.65 225.43 305.00 225.00C311.35 224.57 314.17 224.00 320.00 223.00C325.83 222.00 333.54 220.12 340.00 219.00C346.46 217.88 352.92 217.02 358.75 216.25C364.58 215.48 370.21 214.61 375.00 214.40C379.79 214.19 384.79 214.38 387.50 215.00C390.21 215.62 390.62 217.58 391.25 218.10" stroke="#ee7a32" stroke-width="1.35" fill="none" stroke-linecap="round" stroke-linejoin="round"/><path d="M233.10 246.25C234.88 245.72 239.89 244.35 243.75 243.10C247.61 241.85 252.71 240.10 256.25 238.75C259.79 237.40 260.73 237.19 265.00 235.00C269.27 232.81 276.07 228.93 281.90 225.60C287.73 222.27 293.65 216.93 300.00 215.00C306.35 213.07 312.50 214.00 320.00 214.00C327.50 214.00 339.58 215.25 345.00 215.00C350.42 214.75 348.12 214.17 352.50 212.50C356.88 210.83 366.25 207.08 371.25 205.00C376.25 202.92 378.75 201.92 382.50 200.00C386.25 198.08 391.88 194.58 393.75 193.50" stroke="#ee7a32" stroke-width="1.35" fill="none" stroke-linecap="round" stroke-linejoin="round"/><path d="M257.50 273.75C258.96 271.46 262.29 264.17 266.25 260.00C270.21 255.83 276.04 252.08 281.25 248.75C286.46 245.42 292.08 243.12 297.50 240.00C302.92 236.88 309.17 232.67 313.75 230.00C318.33 227.33 323.12 225.00 325.00 224.00" stroke="#ee7a32" stroke-width="1.35" fill="none" stroke-linecap="round" stroke-linejoin="round"/><path d="M218.10 304.40C219.25 304.08 222.81 303.33 225.00 302.50C227.19 301.67 230.21 299.92 231.25 299.40" stroke="#ee7a32" stroke-width="1.35" fill="none" stroke-linecap="round" stroke-linejoin="round"/><path d="M225.00 192.50C226.67 192.08 231.88 191.25 235.00 190.00C238.12 188.75 240.92 186.67 243.75 185.00C246.58 183.33 250.62 180.83 252.00 180.00" stroke="#2e8a3c" stroke-width="1.35" fill="none" stroke-linecap="round" stroke-linejoin="round"/><path d="M251.25 131.60C253.33 131.96 259.58 132.35 263.75 133.75C267.92 135.15 272.50 137.71 276.25 140.00C280.00 142.29 283.12 144.58 286.25 147.50C289.38 150.42 292.54 154.25 295.00 157.50C297.46 160.75 299.25 163.58 301.00 167.00C302.75 170.42 303.79 173.54 305.50 178.00C307.21 182.46 309.50 189.25 311.25 193.75C313.00 198.25 313.88 201.46 316.00 205.00C318.12 208.54 321.57 211.92 324.00 215.00C326.43 218.08 328.60 220.33 330.60 223.50C332.60 226.67 334.10 230.35 336.00 234.00C337.90 237.65 339.88 241.48 342.00 245.40C344.12 249.32 346.65 253.33 348.75 257.50C350.85 261.67 353.62 268.25 354.60 270.40" stroke="#2e8a3c" stroke-width="1.35" fill="none" stroke-linecap="round" stroke-linejoin="round"/><path d="M251.25 144.40C252.92 144.60 257.71 144.46 261.25 145.60C264.79 146.74 268.33 148.64 272.50 151.25C276.67 153.86 281.46 157.71 286.25 161.25C291.04 164.79 295.96 168.54 301.25 172.50C306.54 176.46 313.21 181.42 318.00 185.00C322.79 188.58 325.29 190.18 330.00 194.00C334.71 197.82 342.42 204.65 346.25 207.90C350.08 211.15 350.74 211.28 353.00 213.50C355.26 215.72 358.67 219.92 359.80 221.20" stroke="#2e8a3c" stroke-width="1.35" fill="none" stroke-linecap="round" stroke-linejoin="round"/><path d="M314.40 145.00C312.21 146.35 304.90 150.70 301.25 153.10C297.60 155.50 295.83 157.21 292.50 159.40C289.17 161.59 284.17 164.48 281.25 166.25C278.33 168.02 276.04 169.38 275.00 170.00" stroke="#2e8a3c" stroke-width="1.35" fill="none" stroke-linecap="round" stroke-linejoin="round"/><path d="M233.75 206.25C236.46 205.21 244.58 202.19 250.00 200.00C255.42 197.81 260.42 195.60 266.25 193.10C272.08 190.60 279.38 187.39 285.00 185.00C290.62 182.61 295.00 180.62 300.00 178.75C305.00 176.88 310.00 175.62 315.00 173.75C320.00 171.88 325.62 168.96 330.00 167.50C334.38 166.04 335.42 166.29 341.25 165.00C347.08 163.71 358.33 161.62 365.00 159.75C371.67 157.88 377.08 155.47 381.25 153.75C385.42 152.03 386.77 150.96 390.00 149.40C393.23 147.84 398.83 145.23 400.60 144.40" stroke="#2e8a3c" stroke-width="1.35" fill="none" stroke-linecap="round" stroke-linejoin="round"/><path d="M203.10 241.25C205.08 240.21 210.52 237.39 215.00 235.00C219.48 232.61 225.21 229.19 230.00 226.90C234.79 224.61 238.33 223.44 243.75 221.25C249.17 219.06 257.29 215.54 262.50 213.75C267.71 211.96 271.08 211.54 275.00 210.50C278.92 209.46 281.83 208.62 286.00 207.50C290.17 206.38 295.79 205.00 300.00 203.75C304.21 202.50 306.46 201.67 311.25 200.00C316.04 198.33 324.58 195.52 328.75 193.75C332.92 191.98 333.44 190.96 336.25 189.40C339.06 187.84 344.04 185.23 345.60 184.40" stroke="#2e8a3c" stroke-width="1.35" fill="none" stroke-linecap="round" stroke-linejoin="round"/><path d="M170.00 212.75C170.42 214.79 171.57 221.39 172.50 225.00C173.43 228.61 174.14 231.77 175.60 234.40C177.06 237.03 180.31 239.73 181.25 240.80" stroke="#2e8a3c" stroke-width="1.35" fill="none" stroke-linecap="round" stroke-linejoin="round"/><path d="M215.60 212.75C217.17 212.92 222.60 213.44 225.00 213.75C227.40 214.06 226.88 213.35 230.00 214.60C233.12 215.85 238.33 219.10 243.75 221.25C249.17 223.40 257.50 225.21 262.50 227.50C267.50 229.79 269.79 231.88 273.75 235.00C277.71 238.12 281.25 242.50 286.25 246.25C291.25 250.00 297.71 254.58 303.75 257.50C309.79 260.42 316.88 261.46 322.50 263.75C328.12 266.04 333.65 269.17 337.50 271.25C341.35 273.33 344.25 275.42 345.60 276.25" stroke="#2e8a3c" stroke-width="1.35" fill="none" stroke-linecap="round" stroke-linejoin="round"/><path d="M252.00 300.00C253.33 301.00 257.83 303.92 260.00 306.00C262.17 308.08 263.54 310.07 265.00 312.50C266.46 314.93 268.12 319.25 268.75 320.60" stroke="#2e8a3c" stroke-width="1.35" fill="none" stroke-linecap="round" stroke-linejoin="round"/><path d="M192.50 264.00C192.67 265.00 193.08 268.17 193.50 270.00C193.92 271.83 193.50 272.60 195.00 275.00C196.50 277.40 199.17 281.90 202.50 284.40C205.83 286.90 211.04 288.44 215.00 290.00C218.96 291.56 224.38 293.12 226.25 293.75" stroke="#2e8a3c" stroke-width="1.35" fill="none" stroke-linecap="round" stroke-linejoin="round"/><path d="M233.75 199.40C236.46 199.50 244.17 199.28 250.00 200.00C255.83 200.72 262.50 202.60 268.75 203.75C275.00 204.90 282.29 206.11 287.50 206.90C292.71 207.69 297.92 208.23 300.00 208.50" stroke="#b038bc" stroke-width="1.35" fill="none" stroke-linecap="round" stroke-linejoin="round"/><path d="M316.25 145.00C315.73 146.88 314.77 152.29 313.10 156.25C311.43 160.21 308.23 165.42 306.25 168.75C304.27 172.08 302.71 173.54 301.25 176.25C299.79 178.96 298.96 181.46 297.50 185.00C296.04 188.54 293.96 193.75 292.50 197.50C291.04 201.25 289.92 204.42 288.75 207.50C287.58 210.58 286.64 212.98 285.50 216.00C284.36 219.02 283.44 222.43 281.90 225.60C280.36 228.77 278.44 230.31 276.25 235.00C274.06 239.69 271.25 248.12 268.75 253.75C266.25 259.38 263.33 264.79 261.25 268.75C259.17 272.71 257.08 276.04 256.25 277.50" stroke="#b038bc" stroke-width="1.35" fill="none" stroke-linecap="round" stroke-linejoin="round"/><path d="M345.60 181.25C343.42 181.56 336.77 182.06 332.50 183.10C328.23 184.14 323.75 185.72 320.00 187.50C316.25 189.28 313.12 191.46 310.00 193.75C306.88 196.04 303.67 198.54 301.25 201.25C298.83 203.96 296.75 206.46 295.50 210.00C294.25 213.54 293.83 218.33 293.75 222.50C293.67 226.67 294.17 231.04 295.00 235.00C295.83 238.96 297.08 242.42 298.75 246.25C300.42 250.08 302.71 254.25 305.00 258.00C307.29 261.75 309.79 265.71 312.50 268.75C315.21 271.79 317.71 273.75 321.25 276.25C324.79 278.75 329.69 282.19 333.75 283.75C337.81 285.31 343.62 285.29 345.60 285.60" stroke="#b038bc" stroke-width="1.35" fill="none" stroke-linecap="round" stroke-linejoin="round"/><path d="M331.70 222.50C330.75 223.92 327.95 227.46 326.00 231.00C324.05 234.54 322.04 239.12 320.00 243.75C317.96 248.38 315.33 254.38 313.75 258.75C312.17 263.12 311.33 266.04 310.50 270.00C309.67 273.96 309.15 277.29 308.75 282.50C308.35 287.71 308.10 294.90 308.10 301.25C308.10 307.60 308.64 317.38 308.75 320.60" stroke="#b038bc" stroke-width="1.35" fill="none" stroke-linecap="round" stroke-linejoin="round"/><path d="M331.70 222.50C332.75 223.08 335.68 224.78 338.00 226.00C340.32 227.22 344.33 229.17 345.60 229.80" stroke="#b038bc" stroke-width="1.35" fill="none" stroke-linecap="round" stroke-linejoin="round"/><path d="M218.10 323.50C219.25 322.82 222.81 321.23 225.00 319.40C227.19 317.57 228.96 315.00 231.25 312.50C233.54 310.00 237.50 305.75 238.75 304.40" stroke="#b038bc" stroke-width="1.35" fill="none" stroke-linecap="round" stroke-linejoin="round"/><path d="M190.60 336.60C191.12 338.00 191.97 342.45 193.75 345.00C195.53 347.55 197.71 349.61 201.25 351.90C204.79 354.19 210.21 356.88 215.00 358.75C219.79 360.62 226.04 361.96 230.00 363.10C233.96 364.24 235.52 365.35 238.75 365.60C241.98 365.85 247.62 364.77 249.40 364.60" stroke="#b038bc" stroke-width="1.35" fill="none" stroke-linecap="round" stroke-linejoin="round"/><path d="M357.50 192.80C357.08 193.58 357.08 195.05 355.00 197.50C352.92 199.95 346.67 205.83 345.00 207.50" stroke="#b038bc" stroke-width="1.35" fill="none" stroke-linecap="round" stroke-linejoin="round"/><path d="M405.60 242.80C405.75 244.00 406.35 245.37 406.50 250.00C406.65 254.63 406.50 267.17 406.50 270.60" stroke="#b038bc" stroke-width="1.35" fill="none" stroke-linecap="round" stroke-linejoin="round"/><path d="M262.25 166.47 L272.26 156.80 L271.27 165.68 L282.64 164.23 L278.13 168.99 L289.95 170.36 L280.56 174.26 L291.30 178.95 L278.49 178.37 L282.01 186.96 L270.91 180.90 L268.83 189.69 L261.53 181.69 L256.02 192.80 L253.95 182.84 L246.01 186.16 L248.44 180.03 L233.56 181.11 L243.21 176.43 L233.20 171.16 L245.65 169.50 L234.20 160.62 L252.87 167.33 L255.67 160.62Z" fill="#ffffff" stroke="#3a3a3a" stroke-width="0.85" stroke-linejoin="miter"/><path d="M321.00 204.63 L330.79 195.10 L329.82 203.85 L340.93 202.43 L336.52 207.12 L348.08 208.47 L338.90 212.32 L349.40 216.94 L336.88 216.37 L340.31 224.84 L329.47 218.86 L327.43 227.54 L320.30 219.65 L314.91 230.60 L312.89 220.78 L305.12 224.05 L307.50 218.01 L292.96 219.07 L302.39 214.45 L292.60 209.26 L304.77 207.62 L293.57 198.87 L311.83 205.49 L314.56 198.87Z" fill="#ffffff" stroke="#3a3a3a" stroke-width="0.85" stroke-linejoin="miter"/><path d="M246.45 284.17 L256.39 274.50 L255.41 283.38 L266.70 281.93 L262.22 286.69 L273.96 288.06 L264.63 291.96 L275.30 296.65 L262.58 296.07 L266.07 304.66 L255.05 298.60 L252.99 307.39 L245.73 299.39 L240.27 310.50 L238.21 300.55 L230.32 303.86 L232.74 297.73 L217.96 298.81 L227.54 294.12 L217.60 288.86 L229.96 287.19 L218.59 278.32 L237.13 285.03 L239.91 278.32Z" fill="#ffffff" stroke="#3a3a3a" stroke-width="0.85" stroke-linejoin="miter"/><g font-family="Liberation Sans"><rect x="145.90" y="121.20" width="104.60" height="35.20" fill="rgba(128,192,230,0.70)" stroke="#4a6a8c" stroke-width="0.9"/><text x="161.40" y="134.90" font-size="10.40" fill="#0c0c0c" stroke="#0c0c0c" stroke-width="0.08" textLength="71.60" lengthAdjust="spacingAndGlyphs">Work Center 1</text><rect x="154.20" y="192.10" width="79.55" height="20.40" fill="rgba(128,192,230,0.70)" stroke="#4a6a8c" stroke-width="0.9"/><text x="169.90" y="202.60" font-size="8.60" fill="#0c0c0c" stroke="#0c0c0c" stroke-width="0.08" textLength="52.80" lengthAdjust="spacingAndGlyphs">Work Center 2</text><rect x="154.20" y="241.20" width="79.40" height="22.40" fill="rgba(128,192,230,0.70)" stroke="#4a6a8c" stroke-width="0.9"/><text x="169.40" y="251.20" font-size="8.80" fill="#0c0c0c" stroke="#0c0c0c" stroke-width="0.08" textLength="52.00" lengthAdjust="spacingAndGlyphs">Work Center 3</text><rect x="153.90" y="299.50" width="63.90" height="35.50" fill="rgba(128,192,230,0.70)" stroke="#4a6a8c" stroke-width="0.9"/><text x="165.30" y="320.40" font-size="7.00" fill="#0c0c0c" stroke="#0c0c0c" stroke-width="0.08" textLength="46.50" lengthAdjust="spacingAndGlyphs">Work Center 4</text><rect x="314.10" y="128.00" width="55.30" height="16.60" fill="rgba(128,192,230,0.70)" stroke="#4a6a8c" stroke-width="0.9"/><text x="322.00" y="135.90" font-size="6.50" fill="#0c0c0c" stroke="#0c0c0c" stroke-width="0.08" textLength="41.40" lengthAdjust="spacingAndGlyphs">Work Center 5</text><rect x="402.20" y="128.00" width="55.80" height="16.60" fill="rgba(128,192,230,0.70)" stroke="#4a6a8c" stroke-width="0.9"/><text x="412.10" y="135.90" font-size="6.50" fill="#0c0c0c" stroke="#0c0c0c" stroke-width="0.08" textLength="41.30" lengthAdjust="spacingAndGlyphs">Work Center 6</text><rect x="345.90" y="170.60" width="96.90" height="21.70" fill="rgba(128,192,230,0.70)" stroke="#4a6a8c" stroke-width="0.9"/><text x="365.50" y="181.20" font-size="9.00" fill="#0c0c0c" stroke="#0c0c0c" stroke-width="0.08" textLength="56.70" lengthAdjust="spacingAndGlyphs">Work Center 7</text><rect x="346.10" y="221.00" width="96.30" height="21.40" fill="rgba(128,192,230,0.70)" stroke="#4a6a8c" stroke-width="0.9"/><text x="364.40" y="231.60" font-size="9.00" fill="#0c0c0c" stroke="#0c0c0c" stroke-width="0.08" textLength="57.10" lengthAdjust="spacingAndGlyphs">Work Center 8</text><rect x="346.10" y="270.50" width="96.20" height="21.70" fill="rgba(128,192,230,0.70)" stroke="#4a6a8c" stroke-width="0.9"/><text x="365.90" y="281.40" font-size="9.00" fill="#0c0c0c" stroke="#0c0c0c" stroke-width="0.08" textLength="56.90" lengthAdjust="spacingAndGlyphs">Work Center 9</text><rect x="249.40" y="320.60" width="95.70" height="64.20" fill="rgba(128,192,230,0.70)" stroke="#4a6a8c" stroke-width="0.9"/><text x="261.80" y="354.20" font-size="10.20" fill="#0c0c0c" stroke="#0c0c0c" stroke-width="0.08" textLength="71.70" lengthAdjust="spacingAndGlyphs">Work Center 10</text></g><rect x="410.10" y="348.49" width="8.01" height="7.71" fill="none" stroke="#2f8a45" stroke-width="0.95"/><rect x="417.11" y="355.00" width="2" height="2" fill="#1f7a35"/></svg>
<div class="a" style="left:0;top:410.6px;width:768px;height:11.4px;background:#262626"></div>
<div class="a" style="left:0;top:422px;width:768px;height:10px;background:#1e1e1e"></div>
<svg width="768" height="22" viewBox="0 410 768 22" style="position:absolute;left:0;top:410px" font-family="Liberation Sans"><rect x="0" y="410.8" width="768" height="11.6" fill="#292929"/><rect x="0" y="422.3" width="768" height="9.7" fill="#323232"/><path d="M9 414.5l-2.2 2.2 2.2 2.2z" fill="#5a5a5a"/><path d="M16.8 414.5l2.2 2.2-2.2 2.2z" fill="#5a5a5a"/><rect x="25.6" y="411.5" width="0.7" height="10" fill="#3a3a3a"/><rect x="26.9" y="410.8" width="34.8" height="9.8" fill="#ffffff"/><text x="35.00" y="419.04" font-size="5.40" fill="#2f8a45" font-weight="bold" textLength="17.50" lengthAdjust="spacingAndGlyphs">Sheet1</text><path d="M70.5 414.4v4.8M68.1 416.8h4.8" stroke="#c8c8c8" stroke-width="0.75"/><rect x="77.8" y="411.5" width="0.7" height="10" fill="#3a3a3a"/><text x="10.00" y="430.00" font-size="5.00" fill="#d0d0d0" font-weight="normal" textLength="15.50" lengthAdjust="spacingAndGlyphs">Ready</text><circle cx="37.5" cy="424.6" r="0.9" stroke="#c8c8c8" stroke-width="0.5" fill="none"/><path d="M34.2 426.2h6.6M37.5 425.6v2.2l-2 2.3M37.5 427.8l2 2.3" stroke="#c8c8c8" stroke-width="0.6" fill="none"/><text x="43.00" y="430.00" font-size="5.00" fill="#d0d0d0" font-weight="normal" textLength="61.50" lengthAdjust="spacingAndGlyphs">Accessibility: Investigate</text><rect x="627.2" y="422.3" width="15.9" height="9.7" fill="#484848"/><rect x="631.6" y="424.6" width="6.4" height="5.4" stroke="#d8d8d8" stroke-width="0.5" fill="none"/><path d="M631.6 426.4h6.4M631.6 428.2h6.4M633.8 424.6v5.4M635.9 424.6v5.4" stroke="#d8d8d8" stroke-width="0.4"/><rect x="647.2" y="424.6" width="6.4" height="5.4" stroke="#c8c8c8" stroke-width="0.5" fill="none"/><rect x="648.5" y="425.3" width="3.8" height="4" fill="#8a8a8a"/><path d="M663.4 424.4v5.6h6.6v-5.6M665.6 424.4v2.6h2.2v-2.6" stroke="#c8c8c8" stroke-width="0.5" fill="none"/><rect x="678.2" y="427.2" width="3.6" height="0.9" fill="#d0d0d0"/><rect x="685" y="427.2" width="44" height="0.9" rx="0.4" fill="#6a6a6a"/><circle cx="706.9" cy="427.6" r="3.2" fill="#a8a8a8"/><path d="M734.2 425.4v4.4M732 427.6h4.4" stroke="#d0d0d0" stroke-width="0.9"/><text x="743.70" y="430.00" font-size="5.00" fill="#d0d0d0" font-weight="normal" textLength="13.90" lengthAdjust="spacingAndGlyphs">100%</text></svg>
</body></html>
